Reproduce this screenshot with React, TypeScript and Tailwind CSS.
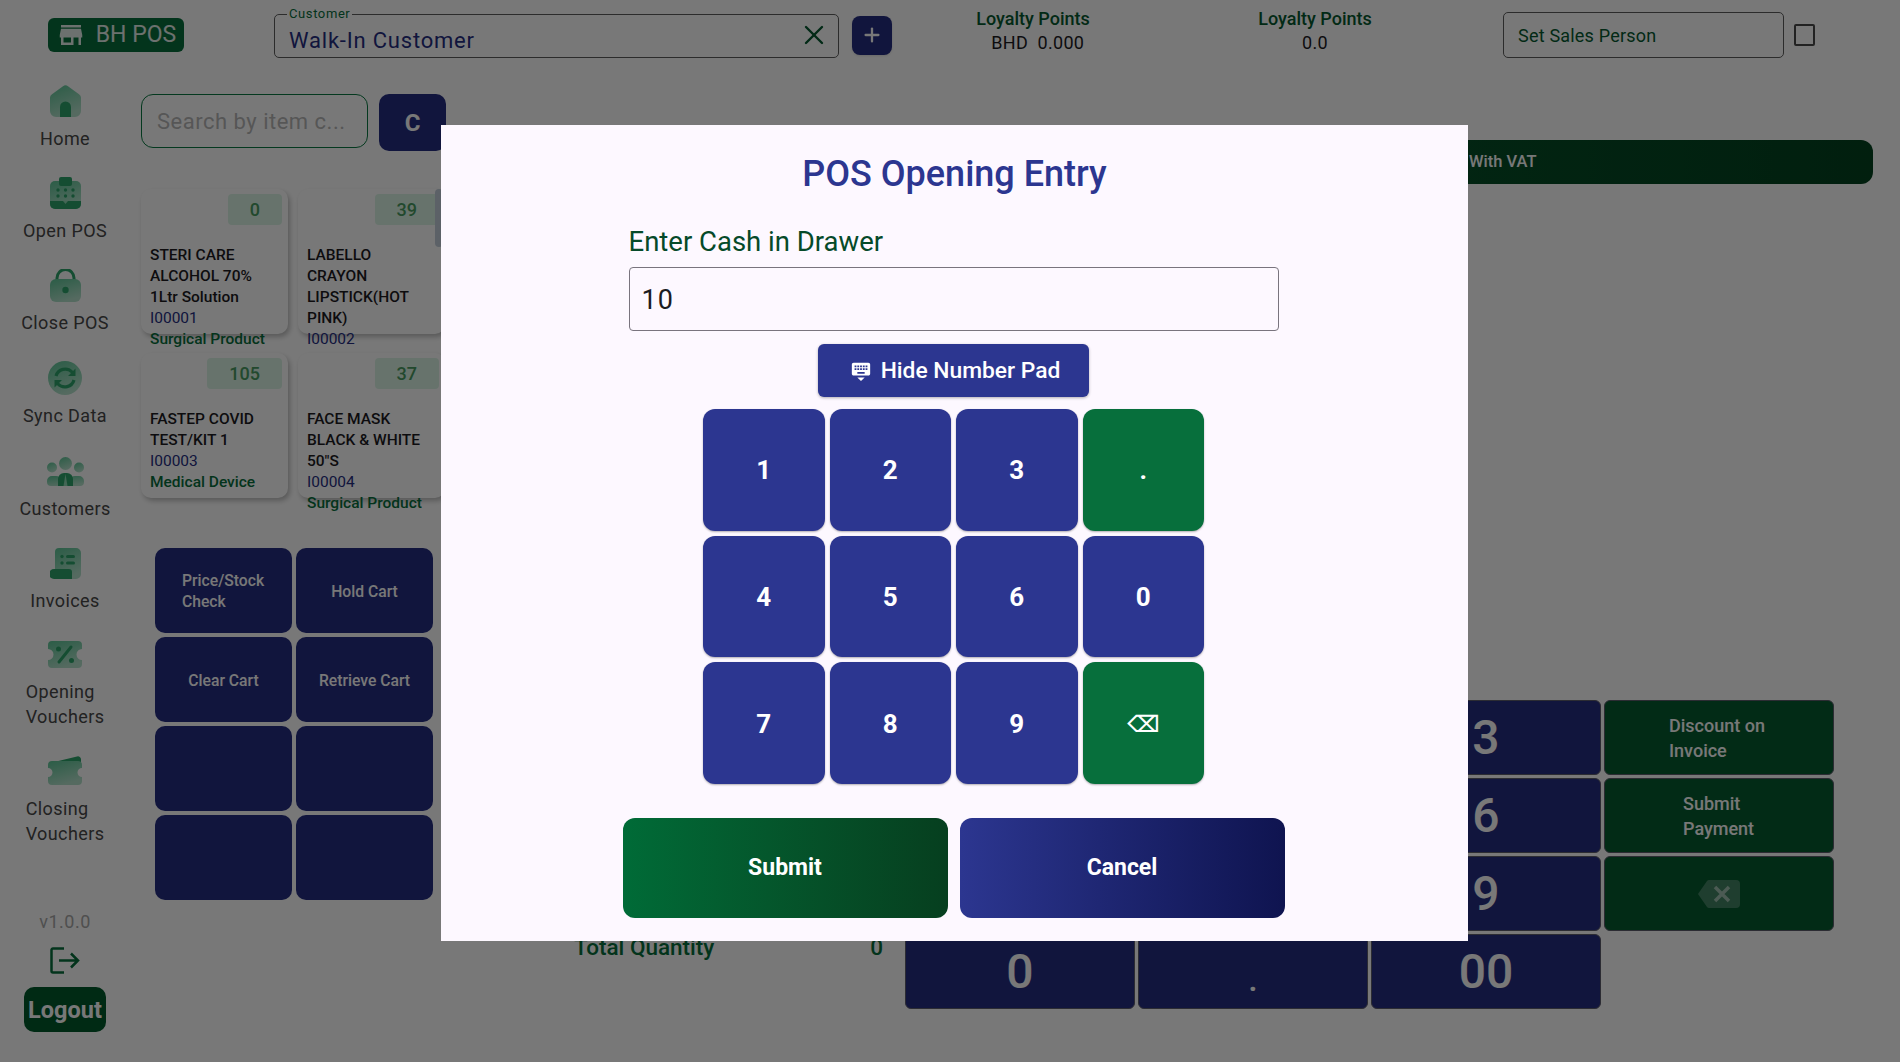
import { Plus, X } from 'lucide-react';
import { MdKeyboardHide, MdStore } from 'react-icons/md';
import type { ReactNode } from 'react';

const roboto = 'font-["Roboto","Liberation_Sans",sans-serif]';

function Duo({ id, w, h, children }: { id: string; w: number; h: number; children: ReactNode }) {
  return (
    <svg width={w} height={h} viewBox={`0 0 ${w} ${h}`} className="block">
      <defs>
        <linearGradient id={id} x1="0" y1="0" x2="0.4" y2="1">
          <stop offset="0" stopColor="#5cc596" />
          <stop offset="1" stopColor="#b4e2cc" />
        </linearGradient>
      </defs>
      {children}
    </svg>
  );
}

const accent = '#2ea56b';

const icons = {
  home: (
    <Duo id="g-home" w={31} h={32}>
      <path d="M13 1.2a4 4 0 0 1 5 0l11 8a4 4 0 0 1 2 3.4V26a6 6 0 0 1-6 6H6a6 6 0 0 1-6-6V12.6a4 4 0 0 1 2-3.4z" fill="url(#g-home)" />
      <path d="M10 32V22a5.500 5.500 0 0 1 11 0v10z" fill={accent} />
    </Duo>
  ),
  open: (
    <Duo id="g-open" w={31} h={32}>
      <rect y="4" width="31" height="28" rx="5" fill="url(#g-open)" />
      <rect x="9" y="0" width="13" height="9" rx="2" fill={accent} />
      <path d="M0 24h31v3a5 5 0 0 1-5 5H5a5 5 0 0 1-5-5z" fill={accent} />
      <path d="M13 24h5l-2.500 3z" fill="#8fd8b4" />
      {[8, 15.500, 23].map((x) =>
        [13, 19].map((y) => <circle key={`${x}-${y}`} cx={x} cy={y} r="1.700" fill={accent} />),
      )}
    </Duo>
  ),
  close: (
    <Duo id="g-close" w={31} h={33}>
      <path d="M7 14V9a8.500 8.500 0 0 1 17 0v5" fill="none" stroke={accent} strokeWidth="3" />
      <rect y="10" width="31" height="23" rx="6" fill="url(#g-close)" />
      <circle cx="15.500" cy="21" r="3.200" fill={accent} />
    </Duo>
  ),
  sync: (
    <Duo id="g-sync" w={34} h={34}>
      <circle cx="17" cy="17" r="17" fill="url(#g-sync)" />
      <path d="M8 15a9.500 9.500 0 0 1 16-4l2 2M26 19a9.500 9.500 0 0 1-16 4l-2-2" fill="none" stroke={accent} strokeWidth="3.200" />
      <path d="M27.500 7.500v7.500H20zM6.500 26.500V19H14z" fill={accent} />
    </Duo>
  ),
  customers: (
    <Duo id="g-cust" w={37} h={29}>
      <circle cx="18.500" cy="6.500" r="6.500" fill="url(#g-cust)" />
      <circle cx="5" cy="10.500" r="5" fill="url(#g-cust)" />
      <circle cx="32" cy="10.500" r="5" fill="url(#g-cust)" />
      <path d="M0 24a5 5 0 0 1 5-5h4a5 5 0 0 1 5 5v5H4a4 4 0 0 1-4-4zM37 24a5 5 0 0 0-5-5h-4a5 5 0 0 0-5 5v5h10a4 4 0 0 0 4-4z" fill="url(#g-cust)" />
      <path d="M11 29v-7a6 6 0 0 1 6-6h3a6 6 0 0 1 6 6v7z" fill={accent} />
      <path d="M18.500 17l-2 12h4z" fill="#8fd8b4" />
    </Duo>
  ),
  invoices: (
    <Duo id="g-inv" w={31} h={31}>
      <path d="M9 0h17a5 5 0 0 1 5 5v21a5 5 0 0 1-5 5H9a4 4 0 0 1-4-4V4a4 4 0 0 1 4-4z" fill="url(#g-inv)" />
      <path d="M4 21h15a3 3 0 0 1 3 3v7H4a4.500 4.500 0 0 1 0-10z" fill={accent} />
      <circle cx="12" cy="8.500" r="1.700" fill={accent} />
      <circle cx="12" cy="15" r="1.700" fill={accent} />
      <rect x="16" y="7" width="9" height="3" rx="1.500" fill={accent} />
      <rect x="16" y="13.500" width="9" height="3" rx="1.500" fill={accent} />
    </Duo>
  ),
  opening: (
    <Duo id="g-opn" w={34} h={27}>
      <path d="M4 0h26a4 4 0 0 1 4 4v4a5.500 5.500 0 0 0 0 11v4a4 4 0 0 1-4 4H4a4 4 0 0 1-4-4v-4a5.500 5.500 0 0 0 0-11V4a4 4 0 0 1 4-4z" fill="url(#g-opn)" />
      <path d="M11 21L23 6" stroke={accent} strokeWidth="3" strokeLinecap="round" />
      <circle cx="10.500" cy="8" r="2.500" fill={accent} />
      <circle cx="23.500" cy="19.500" r="2.500" fill={accent} />
    </Duo>
  ),
  closing: (
    <Duo id="g-cls" w={34} h={30}>
      <path d="M2 7L29 0.500a3 3 0 0 1 4 3V8z" fill={accent} />
      <path d="M4 5h26a4 4 0 0 1 4 4v3a4.500 4.500 0 0 0 0 9v4a4 4 0 0 1-4 4H4a4 4 0 0 1-4-4v-4a4.500 4.500 0 0 0 0-9V9a4 4 0 0 1 4-4z" fill="url(#g-cls)" />
    </Duo>
  ),
};

const navItems = [
  { icon: icons.home, lines: ['Home'], box: 'h-[92px]' },
  { icon: icons.open, lines: ['Open POS'], box: 'h-[92px]' },
  { icon: icons.close, lines: ['Close POS'], box: 'h-[93px]' },
  { icon: icons.sync, lines: ['Sync Data'], box: 'h-[93px]' },
  { icon: icons.customers, lines: ['Customers'], box: 'h-[92px]' },
  { icon: icons.invoices, lines: ['Invoices'], box: 'h-[91px]' },
  { icon: icons.opening, lines: ['Opening', 'Vouchers'], box: 'h-[117px]' },
  { icon: icons.closing, lines: ['Closing', 'Vouchers'], box: 'h-[114px]' },
];

const products = [
  { stock: '0', name: ['STERI CARE', 'ALCOHOL 70%', '1Ltr Solution'], code: 'I00001', group: 'Surgical Product' },
  { stock: '39', name: ['LABELLO', 'CRAYON', 'LIPSTICK(HOT', 'PINK)'], code: 'I00002', group: 'Surgical Product' },
  { stock: '105', name: ['FASTEP COVID', 'TEST/KIT 1'], code: 'I00003', group: 'Medical Device' },
  { stock: '37', name: ['FACE MASK', 'BLACK & WHITE', '50"S'], code: 'I00004', group: 'Surgical Product' },
];

const actions = ['Price/Stock Check', 'Hold Cart', 'Clear Cart', 'Retrieve Cart', '', '', '', ''];

function LoyaltyBlock({ value, className }: { value: string; className: string }) {
  return (
    <div className={`w-[200px] -translate-y-[4px] text-center ${className}`}>
      <p className="text-[18px] leading-[24px] font-medium text-[#065a30]">Loyalty Points</p>
      <p className="text-[18px] leading-[24px] tracking-[0.3px] text-[#1c1b1f] whitespace-pre">{value}</p>
    </div>
  );
}

function Sidebar() {
  return (
    <aside className="flex w-[130px] shrink-0 flex-col items-center pt-[15px] pb-[30px]">
      {navItems.map((item) => (
        <div key={item.lines.join(' ')} className={`flex w-full flex-col items-center ${item.box}`}>
          <div className="flex h-[32px] items-center">{item.icon}</div>
          <div className="mt-[9px] text-[18px] leading-[25px] tracking-[0.4px] text-[#484848]">
            {item.lines.map((line) => (
              <p key={line} className="text-left">{line}</p>
            ))}
          </div>
        </div>
      ))}
      <p className="mt-auto text-[18px] leading-[24px] tracking-[0.5px] text-[#a8a8a8]">v1.0.0</p>
      <svg width="30" height="27" viewBox="0 0 30 27" className="mt-[13px]" fill="none" stroke="#076f3c" strokeWidth="2.500">
        <path d="M14 1.500H3a1.500 1.500 0 0 0-1.500 1.500v21a1.500 1.500 0 0 0 1.500 1.500h11" />
        <path d="M9 13.500h19M21 6.500l7 7-7 7" />
      </svg>
      <button className="mt-[13px] h-[45px] w-[82px] rounded-[10px] bg-[#005a2c] pt-[2px] text-[23.500px] font-bold text-white">Logout</button>
    </aside>
  );
}

function ProductCard({ stock, name, code, group }: (typeof products)[number]) {
  return (
    <div className="h-[145px] w-[147px] rounded-[10px] bg-white pt-[5px] shadow-[2px_3px_5px_rgba(0,0,0,0.25)]">
      <div className="flex justify-end pr-[6px]">
        <span className="flex h-[31px] min-w-[54px] items-center justify-center rounded-[4px] bg-[#dbf4e6] px-[22px] text-[18px] font-medium text-[#4a9c62]">
          {stock}
        </span>
      </div>
      <div className="mt-[19.500px] pl-[9px] text-[15.500px] leading-[21.200px] font-medium whitespace-nowrap">
        {name.map((line) => (
          <p key={line} className="text-[#1c1b1f]">{line}</p>
        ))}
        <p className="font-normal text-[#262e82]">{code}</p>
        <p className="text-[#076f3c]">{group}</p>
      </div>
    </div>
  );
}

function LeftPanel() {
  return (
    <section className="w-[325px] shrink-0 pt-[24px] pl-[11px]">
      <div className="flex items-start gap-[11px]">
        <div className="flex h-[54px] w-[227px] items-center rounded-[12px] border-[1.500px] border-[#0a7a42] pr-[14px] pl-[15px] text-[22px] tracking-[0.5px] text-[#b8b8b8]">
          Search by item c...
        </div>
        <button className="h-[57px] w-[67px] rounded-[10px] bg-[#262e82] text-[24px] font-bold text-white">C</button>
      </div>
      <div className="relative mt-[38px] grid w-[304px] grid-cols-2 gap-x-[10px] gap-y-[19px]">
        {products.map((p) => (
          <ProductCard key={p.code} {...p} />
        ))}
        <span className="absolute top-0 right-[2px] h-[58px] w-[8px] rounded-full bg-[#c3cfdb]" />
      </div>
      <div className="mt-[50px] ml-[14px] grid w-[278px] grid-cols-2 gap-[4px]">
        {actions.map((label, i) => (
          <button
            key={`${label}-${i}`}
            className={`flex h-[85px] items-center justify-center rounded-[10px] bg-[#262e82] px-[10px] pt-[1px] text-[15.700px] leading-[21px] font-medium text-white ${i === 0 ? 'text-left' : 'text-center'}`}
          >
            <span className={i === 0 ? 'ml-[1px] w-[84px]' : ''}>{label}</span>
          </button>
        ))}
      </div>
    </section>
  );
}

function PayPad() {
  const cell = 'flex items-center justify-center rounded-[6px] border border-[#5e5e6e] bg-[#262e82] text-[48px] font-medium leading-none text-white';
  const side = 'flex items-center justify-center rounded-[6px] border border-[#5e5e6e] bg-[#055c30] text-[18px] leading-[25px] font-medium text-white';
  return (
    <div className="grid grid-cols-[230px_230px_230px_230px] grid-rows-[75px_75px_75px_75px] gap-[3px]">
      <div className={cell}>1</div>
      <div className={cell}>2</div>
      <div className={cell}>3</div>
      <div className={side}>
        <span className="w-[100px] text-left">Discount on Invoice</span>
      </div>
      <div className={cell}>4</div>
      <div className={cell}>5</div>
      <div className={cell}>6</div>
      <div className={side}>
        <span className="w-[72px] text-left">Submit Payment</span>
      </div>
      <div className={cell}>7</div>
      <div className={cell}>8</div>
      <div className={cell}>9</div>
      <div className={side}>
        <svg width="42" height="30" viewBox="0 0 42 30">
          <path d="M11 1h27a4 4 0 0 1 4 4v20a4 4 0 0 1-4 4H11a3 3 0 0 1-2-1L0 15 9 2a3 3 0 0 1 2-1z" fill="#ffffff" fillOpacity="0.25" />
          <path d="M17 8l14 14M31 8L17 22" stroke="#ffffff" strokeOpacity="0.5" strokeWidth="3.500" />
        </svg>
      </div>
      <div className={cell}>0</div>
      <div className={cell}>
        <span className="pt-[14px] text-[34px]">.</span>
      </div>
      <div className={cell}>00</div>
    </div>
  );
}

function RightPanel() {
  return (
    <section className="flex flex-1 flex-col pt-[70px] pl-[25px]">
      <div className="flex h-[44px] w-[1393px] items-center rounded-r-[12px] rounded-bl-[2px] bg-gradient-to-r from-[#076f3c] to-[#04421f] pt-[1px] pl-[989px] text-[16.500px] font-medium text-white">
        With VAT
      </div>
      <div className="mt-[516px] flex -ml-[25px]">
        <div className="flex w-[450px] justify-between pt-[233px] pr-[22px] pl-[119px] text-[22.500px] leading-[28px] font-medium text-[#076f3c]">
          <span>Total Quantity</span>
          <span>0</span>
        </div>
        <PayPad />
      </div>
    </section>
  );
}

function OpeningDialog() {
  const key = 'flex items-center justify-center rounded-[12px] pt-[2px] text-white shadow-[0_1px_2px_rgba(0,0,0,0.3)]';
  return (
    <div className="fixed inset-0 bg-black/[0.53]">
      <div className="absolute top-[125px] left-[441px] flex h-[816px] w-[1027px] flex-col items-center bg-[#fdf8ff] pr-[2px]">
        <h1 className="mt-[27px] ml-[2px] text-[36px] leading-[44px] font-medium text-[#2c3690]">POS Opening Entry</h1>
        <div className="mt-[30px] w-[650px]">
          <p className="text-[27.500px] leading-[32px] text-[#054a29]">Enter Cash in Drawer</p>
          <div className="mt-[9px] flex h-[64px] items-center rounded-[4px] border border-[#79747e] px-[12px] pt-[3px] text-[27px] tracking-[1px] text-[#1c1b1f]">
            10
          </div>
        </div>
        <button className="mt-[13px] flex h-[53px] w-[271px] items-center justify-center gap-[9px] rounded-[6px] bg-[#2c3690] pt-[1px] pl-[3px] text-[22.800px] font-medium text-white shadow-[0_1px_3px_rgba(0,0,0,0.3)]">
          <MdKeyboardHide size={22} />
          Hide Number Pad
        </button>
        <div className="mt-[12px] grid h-[375px] w-[501px] grid-cols-4 grid-rows-3 gap-[5px]">
          {['1', '2', '3', '.', '4', '5', '6', '0', '7', '8', '9', '⌫'].map((k) => (
            <button
              key={k}
              className={`${key} ${k === '.' || k === '⌫' ? 'bg-[#076f3c]' : 'bg-[#2c3690]'} ${k === '⌫' ? 'font-["DejaVu_Sans",sans-serif] text-[23px] font-bold' : 'text-[26px] font-bold'}`}
            >
              {k}
            </button>
          ))}
        </div>
        <div className="mt-[34px] flex gap-[12px]">
          <button className="h-[100px] w-[325px] rounded-[12px] bg-gradient-to-r from-[#006b37] to-[#063f1f] pt-[1px] text-[23px] font-bold text-white">Submit</button>
          <button className="h-[100px] w-[325px] rounded-[12px] bg-gradient-to-r from-[#2c3690] to-[#0f1450] pt-[1px] text-[23px] font-bold text-white">Cancel</button>
        </div>
      </div>
    </div>
  );
}

export default function App() {
  return (
    <div className={`flex h-screen w-screen flex-col overflow-hidden bg-white ${roboto}`}>
      <header className="flex h-[70px] shrink-0 items-center">
        <div className="ml-[48px] flex h-[34px] w-[136px] items-center justify-center gap-[10px] rounded-[6px] bg-[#076f3c] text-[23px] text-white/90">
          <MdStore size={30} />
          BH POS
        </div>
        <fieldset className="ml-[90px] h-[48px] w-[565px] -translate-y-[1px] rounded-[5px] border border-[#5f5f5f] pr-[8px] pl-[12px]">
          <legend className="px-[2px] text-[13px] leading-[8px] tracking-[0.6px] text-[#076f3c]">Customer</legend>
          <div className="flex h-[32px] items-center justify-between pt-[13px] pl-[2px]">
            <span className="text-[22px] leading-[32px] tracking-[0.8px] text-[#262e82]">Walk-In Customer</span>
            <X size={32} strokeWidth={1.800} className="-mt-[11px] text-[#065a30]" />
          </div>
        </fieldset>
        <button className="ml-[13px] flex h-[39px] w-[40px] items-center justify-center rounded-[8px] bg-[#262e82] text-white shadow">
          <Plus size={22} strokeWidth={2.500} />
        </button>
        <LoyaltyBlock value="  BHD  0.000" className="ml-[41px]" />
        <LoyaltyBlock value="0.0" className="ml-[82px]" />
        <div className="ml-[88px] flex h-[46px] w-[281px] items-center rounded-[5px] border border-[#5f5f5f] pl-[14px] text-[18px] tracking-[0.2px] text-[#065a30]">
          Set Sales Person
        </div>
        <span className="ml-[10px] h-[22px] w-[21px] rounded-[2px] border-2 border-[#4a4a4a]" />
      </header>
      <div className="flex min-h-0 flex-1">
        <Sidebar />
        <LeftPanel />
        <RightPanel />
      </div>
      <OpeningDialog />
    </div>
  );
}
